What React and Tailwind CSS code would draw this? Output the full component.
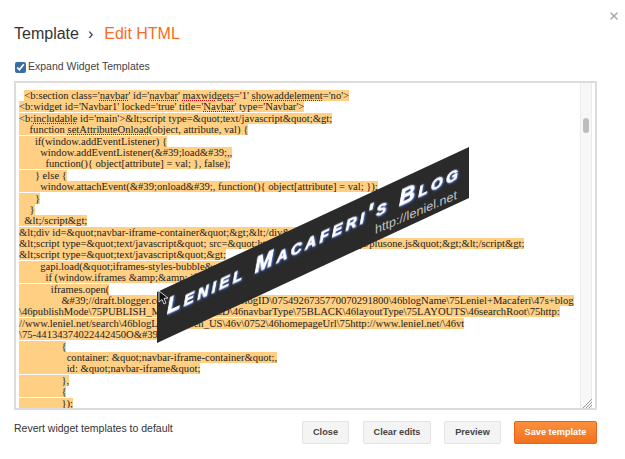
import { X } from "lucide-react";

const sans = { fontFamily: '"Liberation Sans", Arial, sans-serif' };

// texto del editor: lo que va entre ~ lleva el subrayado del corrector
const lines = [
  { pre: "  ", text: "<b:section class='~navbar~' id='~navbar~' ~maxwidgets~='1' ~showaddelement~='no'>" },
  { text: "<b:widget id='Navbar1' locked='true' title='~Navbar~' type='Navbar'>" },
  { text: "<b:~includable~ id='main'>&lt;script type=&quot;text/javascript&quot;&gt;" },
  { text: "    function ~setAttributeOnload~(object, attribute, val) {" },
  { text: "      if(window.addEventListener) {" },
  { text: "        window.addEventListener(&#39;load&#39;,," },
  { text: "          function(){ object[attribute] = val; }, false);" },
  { text: "      } else {" },
  { text: "        window.attachEvent(&#39;onload&#39;, function(){ object[attribute] = val; });" },
  { text: "      }" },
  { text: "    }" },
  { text: "  &lt;/script&gt;" },
  { text: "&lt;div id=&quot;navbar-iframe-container&quot;&gt;&lt;/div&gt;" },
  { text: "&lt;script type=&quot;text/javascript&quot; src=&quot;https://apis.google.com/js/plusone.js&quot;&gt;&lt;/script&gt;" },
  { text: "&lt;script type=&quot;text/javascript&quot;&gt;" },
  { text: "        gapi.load(&quot;iframes-styles-bubble&quot;, function() {" },
  { text: "          if (window.iframes &amp;&amp; iframes.open) {" },
  { text: "            iframes.open(" },
  { text: "                &#39;//draft.blogger.com/navbar.g?targetBlogID\\0754926735770070291800\\46blogName\\75Leniel+Macaferi\\47s+blog" },
  { text: "\\46publishMode\\75PUBLISH_MODE_HOSTED\\46navbarType\\75BLACK\\46layoutType\\75LAYOUTS\\46searchRoot\\75http:" },
  { text: "//www.leniel.net/search\\46blogLocale\\75en_US\\46v\\0752\\46homepageUrl\\75http://www.leniel.net/\\46vt" },
  { text: "\\75-44134374022442450O&#39;," },
  { text: "                {" },
  { text: "                  container: &quot;navbar-iframe-container&quot;," },
  { text: "                  id: &quot;navbar-iframe&quot;" },
  { text: "                }," },
  { text: "                {" },
  { text: "                });" },
];

function CodeLine({ pre, text }) {
  const parts = text.split("~");
  return (
    <div className="h-[11.4px] leading-[11.4px] whitespace-pre">
      {pre}
      <span className="bg-[#ffcf83]">
        {parts.map((p, i) =>
          i % 2 ? (
            <span key={i} className="relative underline decoration-dotted decoration-red-600">{p}</span>
          ) : (
            <span key={i}>{p}</span>
          )
        )}
      </span>
    </div>
  );
}

function Btn({ children, className }) {
  return (
    <button
      style={sans}
      className={"h-[23px] rounded-[2px] border border-[#e3e3e3] bg-[#f4f4f4] text-[9.2px] font-bold text-[#444] " + className}
    >
      {children}
    </button>
  );
}

function Banner() {
  return (
    <svg className="absolute left-[150px] top-[140px]" width="330" height="210" viewBox="150 140 330 210">
      <polygon points="157,292 469,147 469,198 157,343" fill="#2a2a2b" />
      <g transform="matrix(1,-0.465,0,1,167,314)">
        <text
          x="0"
          y="0"
          fill="#fff"
          stroke="#fff"
          strokeWidth="0.8"
          fontSize="22"
          fontWeight="700"
          fontStyle="italic"
          textLength="291"
          lengthAdjust="spacing"
          className="[font-variant:small-caps] drop-shadow-[1px_1px_1px_#3f68d0]"
          style={sans}
        >
          Leniel Macaferi's Blog
        </text>
      </g>
      <g transform="matrix(1,-0.43,0,1,375,234)">
        <text x="0" y="0" fill="#c4c4c4" fontSize="12.5" textLength="82" style={sans}>http://leniel.net</text>
      </g>
      {/* cursor */}
      <path d="M159 291 L159 302 L162 299.5 L164 304 L166 303 L164 298.5 L168 298 Z" fill="#111" stroke="#fff" strokeWidth="0.8" />
    </svg>
  );
}

export default function App() {
  return (
    <div className="relative w-[625px] h-[459px] bg-white overflow-hidden flex flex-col pl-[14px] pr-[28px]" style={sans}>
      <X className="absolute right-[5px] top-[10px] text-[#aaa]" size={12} strokeWidth={3} />

      <div className="mt-[23px] flex items-center h-[22px] text-[16px] leading-[22px]">
        <span className="text-[#333]">Template</span>
        <span className="ml-[9px] text-[#333]">›</span>
        <span className="ml-[11px] text-[#f96b1e]">Edit HTML</span>
      </div>

      <label className="mt-[11px] flex items-center h-[22px] text-[10.5px] text-[#444]">
        <input type="checkbox" defaultChecked className="ml-[1px] w-[11px] h-[11px] accent-[#3b6ea5]" />
        <span className="ml-[2px]">Expand Widget Templates</span>
      </label>

      <div className="mt-[3px] h-[329px] flex border-2 border-[#dcdcdc] bg-white">
        <div
          className="flex-1 overflow-hidden pl-[3px] pt-[7px] text-[10.6px] text-[#222]"
          style={{ fontFamily: '"Liberation Serif", "Times New Roman", serif' }}
        >
          {lines.map((l, i) => (
            <CodeLine key={i} {...l} />
          ))}
        </div>
        <div className="relative w-[12px] mr-[3px] bg-[#f7f7f7] border-x border-[#ececec]">
          <div className="absolute left-[2px] top-[35px] w-[6px] h-[15px] rounded-full bg-[#bdbdbd]" />
          <svg className="absolute -right-[1px] bottom-0" width="10" height="10" viewBox="0 0 10 10">
            <path d="M1 10 L10 1 M4 10 L10 4 M7 10 L10 7" stroke="#999" strokeWidth="1" />
          </svg>
        </div>
      </div>

      <div className="mt-[11px] flex items-start">
        <span className="flex-1 text-[10.5px] leading-[14px] text-[#333]">Revert widget templates to default</span>
        <Btn className="w-[47px]">Close</Btn>
        <Btn className="ml-[14px] w-[68px]">Clear edits</Btn>
        <Btn className="ml-[13px] w-[57px]">Preview</Btn>
        <button className="ml-[13px] h-[23px] w-[83px] rounded-[2px] border border-[#e8621b] bg-gradient-to-b from-[#fb8f3d] to-[#f2711c] text-[9.2px] font-bold text-white">
          Save template
        </button>
      </div>

      <Banner />
    </div>
  );
}
